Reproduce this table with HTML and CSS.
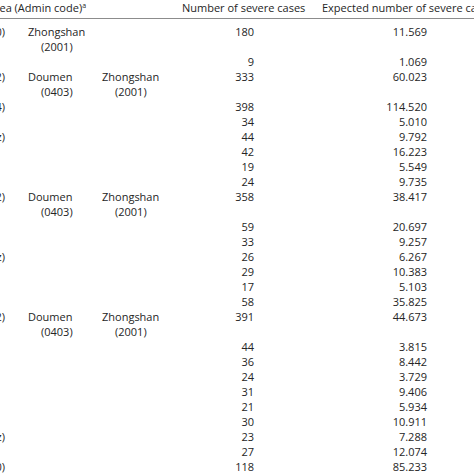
FILE: index.html
```html
<!DOCTYPE html>
<html lang="en">
<head>
<meta charset="utf-8">
<title>Severe cases by area</title>
<link rel="stylesheet" href="styles.css">
</head>
<body>
<div class="viewport">
  <div class="grid">
    <div class="th area">Area (Admin code)<sup>a</sup></div>
    <div class="th">Number of severe cases</div>
    <div class="th">Expected number of severe cases</div>

    <div class="c1">(4400)</div><div class="c2">Zhongshan<br>(2001)</div><div class="c3"></div><div class="n1">180</div><div class="n2">11.569</div>
    <div class="c1"></div><div class="c2"></div><div class="c3"></div><div class="n1">9</div><div class="n2">1.069</div>
    <div class="c1">(0402)</div><div class="c2">Doumen<br>(0403)</div><div class="c3">Zhongshan<br>(2001)</div><div class="n1">333</div><div class="n2">60.023</div>
    <div class="c1">(0404)</div><div class="c2"></div><div class="c3"></div><div class="n1">398</div><div class="n2">114.520</div>
    <div class="c1"></div><div class="c2"></div><div class="c3"></div><div class="n1">34</div><div class="n2">5.010</div>
    <div class="c1">(Xiangz)</div><div class="c2"></div><div class="c3"></div><div class="n1">44</div><div class="n2">9.792</div>
    <div class="c1"></div><div class="c2"></div><div class="c3"></div><div class="n1">42</div><div class="n2">16.223</div>
    <div class="c1"></div><div class="c2"></div><div class="c3"></div><div class="n1">19</div><div class="n2">5.549</div>
    <div class="c1"></div><div class="c2"></div><div class="c3"></div><div class="n1">24</div><div class="n2">9.735</div>
    <div class="c1">(0402)</div><div class="c2">Doumen<br>(0403)</div><div class="c3">Zhongshan<br>(2001)</div><div class="n1">358</div><div class="n2">38.417</div>
    <div class="c1"></div><div class="c2"></div><div class="c3"></div><div class="n1">59</div><div class="n2">20.697</div>
    <div class="c1"></div><div class="c2"></div><div class="c3"></div><div class="n1">33</div><div class="n2">9.257</div>
    <div class="c1">(Xiangz)</div><div class="c2"></div><div class="c3"></div><div class="n1">26</div><div class="n2">6.267</div>
    <div class="c1"></div><div class="c2"></div><div class="c3"></div><div class="n1">29</div><div class="n2">10.383</div>
    <div class="c1"></div><div class="c2"></div><div class="c3"></div><div class="n1">17</div><div class="n2">5.103</div>
    <div class="c1"></div><div class="c2"></div><div class="c3"></div><div class="n1">58</div><div class="n2">35.825</div>
    <div class="c1">(0402)</div><div class="c2">Doumen<br>(0403)</div><div class="c3">Zhongshan<br>(2001)</div><div class="n1">391</div><div class="n2">44.673</div>
    <div class="c1"></div><div class="c2"></div><div class="c3"></div><div class="n1">44</div><div class="n2">3.815</div>
    <div class="c1"></div><div class="c2"></div><div class="c3"></div><div class="n1">36</div><div class="n2">8.442</div>
    <div class="c1"></div><div class="c2"></div><div class="c3"></div><div class="n1">24</div><div class="n2">3.729</div>
    <div class="c1"></div><div class="c2"></div><div class="c3"></div><div class="n1">31</div><div class="n2">9.406</div>
    <div class="c1"></div><div class="c2"></div><div class="c3"></div><div class="n1">21</div><div class="n2">5.934</div>
    <div class="c1"></div><div class="c2"></div><div class="c3"></div><div class="n1">30</div><div class="n2">10.911</div>
    <div class="c1">(Xiangz)</div><div class="c2"></div><div class="c3"></div><div class="n1">23</div><div class="n2">7.288</div>
    <div class="c1"></div><div class="c2"></div><div class="c3"></div><div class="n1">27</div><div class="n2">12.074</div>
    <div class="c1">(0400)</div><div class="c2"></div><div class="c3"></div><div class="n1">118</div><div class="n2">85.233</div>
  </div>
</div>
</body>
</html>
```

FILE: styles.css
```css
html, body {
  margin: 0;
  padding: 0;
  background: #ffffff;
}
.viewport {
  width: 474px;
  height: 474px;
  overflow: hidden;
}
.grid {
  display: grid;
  grid-template-columns: 68px 88px 76px 140px 248px;
  width: 620px;
  margin-left: -60px;
  font-family: "Open Sans", "Liberation Sans", sans-serif;
  font-size: 11px;
  line-height: 15px;
  color: #252525;
}
.grid > div {
  white-space: nowrap;
}
.th {
  padding-bottom: 3px;
  border-bottom: 1px solid #8c8c8c;
  margin-bottom: 5px;
  padding-left: 10px;
}
.th.area {
  grid-column: span 3;
  padding-left: 48px;
}
.th:last-child {
  padding-left: 11px;
}
.th sup {
  font-size: 7px;
  line-height: 0;
  vertical-align: 4px;
}
.c1 {
  text-align: right;
  padding-right: 3px;
}
.c2, .c3 {
  text-indent: -13px;
}
.c2 {
  padding-left: 33px;
}
.c3 {
  padding-left: 19px;
}
.n1 {
  text-align: right;
  padding-right: 58px;
}
.n2 {
  text-align: right;
  padding-right: 133px;
}
```
